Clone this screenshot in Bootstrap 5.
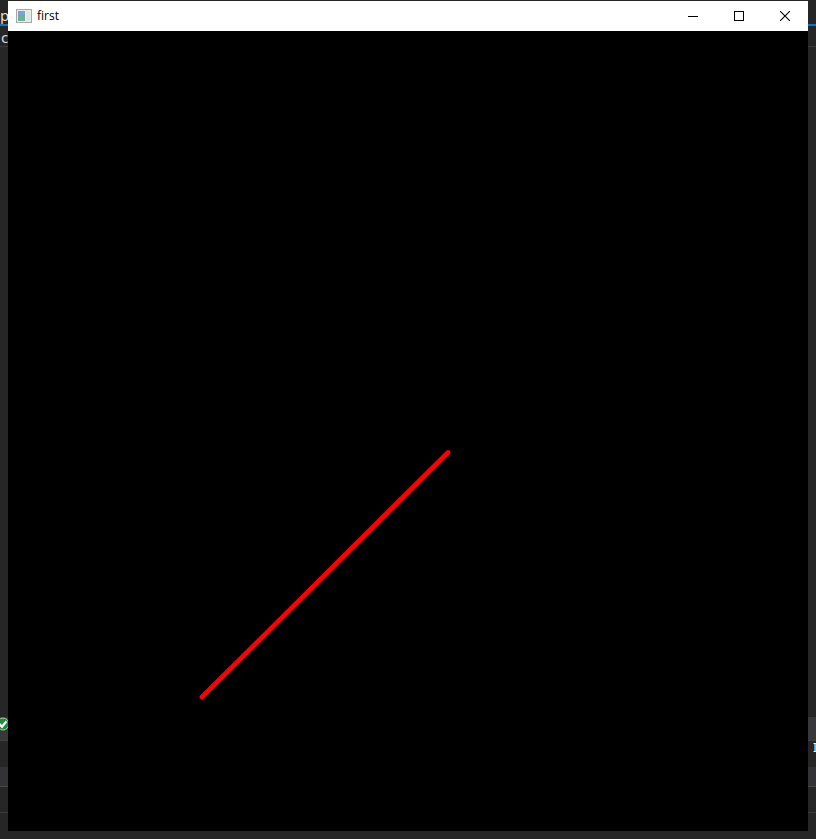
<!DOCTYPE html>
<html lang="en">
<head>
<meta charset="utf-8">
<title>first</title>
<link href="https://cdn.jsdelivr.net/npm/bootstrap@5.3.0/dist/css/bootstrap.min.css" rel="stylesheet">
<style>
html, body { height: 100%; }
body { background: #262627; overflow: hidden; font-family: "Noto Sans", "Open Sans", sans-serif; }
.desk { position: relative; width: 816px; height: 839px; }
.gutter { position: absolute; top: 0; width: 8px; height: 831px; background: #262627; overflow: hidden; }
.gutter-l { left: 0; }
.gutter-r { left: 808px; }
.seam { position: absolute; left: 0; right: 0; }
.seam-blue { top: 24px; height: 2px; background: #007acc; }
.seam-dark { top: 46px; height: 1px; background: #3a3a3b; }
.seam-band { top: 717px; height: 23px; background: #38383a; }
.seam-band2 { top: 767px; height: 19px; background: #333336; }
.seam-line1 { top: 740px; height: 1px; background: #414143; }
.seam-line2 { top: 786px; height: 1px; background: #48484a; }
.seam-line3 { top: 812px; height: 1px; background: #3c3c3e; }
.seam-text { position: absolute; font-size: 15px; line-height: 16px; color: #e8e8e8; }
.seam-p { left: 0; top: 7px; color: #f0dcc0; }
.seam-c { left: 1px; top: 29px; color: #d0d8e0; }
.seam-j { left: 5px; top: 740px; font-size: 12px; color: #f0f0f0; }
.check { position: absolute; left: -4px; top: 717px; }
.app-win { position: absolute; left: 8px; top: 1px; width: 800px; height: 830px; }
.cap-bar { height: 30px; background: #fff; color: #000; }
.cap-icon { width: 16px; height: 14px; margin-left: 8px; }
.cap-title { font-family: "Open Sans", "Noto Sans", sans-serif; font-size: 12px; line-height: 16px; margin-left: 5px; }
.cap-btn { width: 46px; height: 30px; }
.canvas-area { width: 800px; height: 800px; background: #000; display: block; }
</style>
</head>
<body>
<div class="desk">
  <div class="gutter gutter-l">
    <span class="seam-text seam-p">p</span>
    <span class="seam-text seam-c">c</span>
    <div class="seam seam-blue"></div>
    <div class="seam seam-dark"></div>
    <div class="seam seam-band"></div>
    <div class="seam seam-line1"></div>
    <div class="seam seam-band2"></div>
    <div class="seam seam-line2"></div>
    <div class="seam seam-line3"></div>
    <svg class="check" width="14" height="14" viewBox="0 0 14 14" aria-hidden="true">
      <circle cx="7" cy="7" r="6" fill="#1c8f3a" stroke="#b8c4b8"/>
      <path d="M3.5 7 6 9.8 10.5 4.2" fill="none" stroke="#fff" stroke-width="2.2"/>
    </svg>
  </div>
  <div class="gutter gutter-r">
    <div class="seam seam-blue"></div>
    <div class="seam seam-dark"></div>
    <div class="seam seam-band"></div>
    <div class="seam seam-line1"></div>
    <span class="seam-text seam-j">I</span>
    <div class="seam seam-band2"></div>
    <div class="seam seam-line2"></div>
    <div class="seam seam-line3"></div>
  </div>
  <div class="app-win d-flex flex-column">
    <div class="cap-bar d-flex align-items-center">
      <svg class="cap-icon" viewBox="0 0 16 14" aria-hidden="true">
        <rect x=".5" y=".5" width="15" height="13" fill="#e8eeee" stroke="#a8a8a8"/>
        <rect x="2" y="2" width="7" height="10" fill="#6fae98"/>
        <rect x="2" y="2" width="7" height="4" fill="#7aa4cc"/>
        <rect x="10" y="2" width="4" height="10" fill="#dbe9e2"/>
      </svg>
      <span class="cap-title">first</span>
      <div class="ms-auto d-flex">
        <div class="cap-btn d-flex align-items-center justify-content-center">
          <svg width="10" height="10" viewBox="0 0 10 10" aria-hidden="true"><path d="M0 5.5h10" stroke="#000"/></svg>
        </div>
        <div class="cap-btn d-flex align-items-center justify-content-center">
          <svg width="10" height="10" viewBox="0 0 10 10" aria-hidden="true"><rect x=".5" y=".5" width="9" height="9" fill="none" stroke="#000"/></svg>
        </div>
        <div class="cap-btn d-flex align-items-center justify-content-center">
          <svg width="10" height="10" viewBox="0 0 10 10" aria-hidden="true"><path d="M0 0 10 10M10 0 0 10" stroke="#000" stroke-width="1.05"/></svg>
        </div>
      </div>
    </div>
    <svg class="canvas-area" viewBox="0 0 800 800" aria-label="Red line on black canvas">
      <line x1="194" y1="666" x2="440" y2="421.5" stroke="#ff0000" stroke-width="4.8" stroke-linecap="round"/>
    </svg>
  </div>
</div>
<script src="https://cdn.jsdelivr.net/npm/bootstrap@5.3.0/dist/js/bootstrap.bundle.min.js"></script>
</body>
</html>
